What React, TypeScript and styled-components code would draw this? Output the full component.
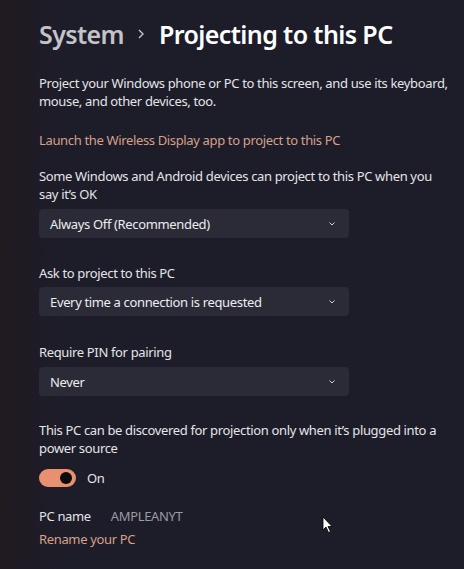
import React, { FC } from 'react'
import styled, { createGlobalStyle } from 'styled-components'

const GlobalStyle = createGlobalStyle`
    html, body {
        margin: 0;
        padding: 0;
        background: #1d1d29;
    }
    body {
        font-family: "Noto Sans", "Open Sans", sans-serif;
        letter-spacing: -0.35px;
    }
`

const Page = styled.div`
    position: relative;
    width: 464px;
    height: 569px;
    box-sizing: border-box;
    padding: 14px 0 0 39px;
    background: linear-gradient(90deg, #211b21 0px, #1e1b25 30px, #1d1d29 70px, #1d1d29 100%);
    color: #e4e4e8;
    overflow: hidden;
`

const Header = styled.h1`
    display: flex;
    align-items: center;
    margin: 0;
    font-size: 25px;
    font-weight: 600;
    height: 40px;
    letter-spacing: -0.6px;
`

const Crumb = styled.span<{ $current?: boolean }>`
    color: ${p => (p.$current ? '#ffffff' : '#c3c3c8')};
`

const Chevron = styled.span`
    display: inline-flex;
    margin: 0 14px 0 13px;
    color: #c3c3c8;
`

const Text = styled.p<{ $top?: number }>`
    margin: ${p => p.$top ?? 0}px 0 0 0;
    font-size: 13px;
    line-height: 18px;
    max-width: 410px;
`

const Link = styled.a<{ $top?: number }>`
    display: block;
    margin-top: ${p => p.$top ?? 0}px;
    font-size: 13px;
    line-height: 18px;
    color: #d7a088;
    text-decoration: none;
`

const Select = styled.div<{ $top?: number }>`
    display: flex;
    align-items: center;
    justify-content: space-between;
    box-sizing: border-box;
    width: 310px;
    height: 29px;
    margin-top: ${p => p.$top ?? 0}px;
    padding: 0 12px 0 11px;
    background: #2b2b37;
    border-radius: 4px;
    font-size: 13px;
    color: #ececf0;
`

const ToggleRow = styled.div`
    display: flex;
    align-items: center;
    gap: 11px;
    margin-top: 12px;
    font-size: 13px;
`

const Track = styled.div`
    position: relative;
    width: 37px;
    height: 18px;
    border-radius: 9px;
    background: #e8906f;
`

const Knob = styled.div`
    position: absolute;
    right: 4px;
    top: 3px;
    width: 12px;
    height: 12px;
    border-radius: 50%;
    background: #0c0c0c;
`

const NameRow = styled.div`
    display: flex;
    gap: 20px;
    margin-top: 20px;
    font-size: 13px;
    line-height: 18px;
`

const NameValue = styled.span`
    color: #9a9aa2;
`

const Cursor = styled.svg`
    position: absolute;
    left: 322px;
    top: 516px;
`

const Arrow: FC = () => (
    <svg width="10" height="10" viewBox="0 0 10 10">
        <path d="M2.5 3.5 L5 6 L7.5 3.5" fill="none" stroke="#cfcfd4" strokeWidth="1" />
    </svg>
)

const Dropdown: FC<{ value: string; top?: number }> = ({ value, top }) => (
    <Select $top={top}>
        <span>{value}</span>
        <Arrow />
    </Select>
)

export default function App() {
    return (
        <Page>
            <GlobalStyle />
            <Header>
                <Crumb>System</Crumb>
                <Chevron>
                    <svg width="8" height="12" viewBox="0 0 8 12">
                        <path d="M2 2 L6 6 L2 10" fill="none" stroke="#c3c3c8" strokeWidth="1.4" />
                    </svg>
                </Chevron>
                <Crumb $current>Projecting to this PC</Crumb>
            </Header>
            <Text $top={20}>
                Project your Windows phone or PC to this screen, and use its keyboard, mouse, and other devices, too.
            </Text>
            <Link $top={21}>Launch the Wireless Display app to project to this PC</Link>
            <Text $top={18}>
                Some Windows and Android devices can project to this PC when you say it’s OK
            </Text>
            <Dropdown value="Always Off (Recommended)" top={6} />
            <Text $top={26}>Ask to project to this PC</Text>
            <Dropdown value="Every time a connection is requested" top={5} />
            <Text $top={27}>Require PIN for pairing</Text>
            <Dropdown value="Never" top={6} />
            <Text $top={25}>
                This PC can be discovered for projection only when it’s plugged into a power source
            </Text>
            <ToggleRow>
                <Track>
                    <Knob />
                </Track>
                <span>On</span>
            </ToggleRow>
            <NameRow>
                <span>PC name</span>
                <NameValue>AMPLEANYT</NameValue>
            </NameRow>
            <Link $top={5}>Rename your PC</Link>
            <Cursor width="12" height="18" viewBox="0 0 12 18">
                <path d="M1 1 L1 14 L4 11 L6.5 16.5 L8.5 15.5 L6 10.5 L10 10.5 Z" fill="#ffffff" stroke="#000000" strokeWidth="0.8" />
            </Cursor>
        </Page>
    )
}
